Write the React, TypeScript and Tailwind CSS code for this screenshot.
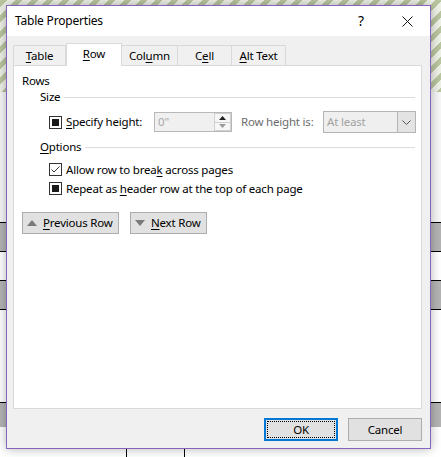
import React from "react";

const font = { fontFamily: '"Noto Sans", "Open Sans", sans-serif' };

function Box({ kind }: { kind: "ind" | "check" }) {
  return (
    <div className="relative w-[13px] h-[13px] border border-[#333333] bg-white shrink-0">
      {kind === "ind" ? (
        <div className="absolute left-[2px] top-[2px] w-[7px] h-[7px] bg-[#1a1a1a]" />
      ) : (
        <svg className="absolute left-0 top-0" width="11" height="11" viewBox="0 0 11 11">
          <polyline points="1.5,5.5 4,8 9.5,2.5" fill="none" stroke="#333" strokeWidth="1" />
        </svg>
      )}
    </div>
  );
}

function Sep({ ul, rest }: { ul: string; rest: string }) {
  return (
    <div className="flex items-center h-[16px] gap-[4px]">
      <span className="leading-[16px]">
        <u className="underline-offset-2">{ul}</u>
        {rest}
      </span>
      <div className="flex-1 h-px bg-[#dcdcdc]" />
    </div>
  );
}

export default function App() {
  return (
    <div
      className="relative w-[441px] h-[457px] overflow-hidden bg-white text-[11.5px] tracking-[-0.2px] whitespace-nowrap text-black"
      style={font}
    >
      {/* background document */}
      <div className="flex flex-col w-full h-full">
        <div className="h-[92px] bg-[repeating-linear-gradient(135deg,#b9c69f_0px,#b9c69f_5px,#eef1e6_5px,#eef1e6_11px)]" />
        <div className="h-[130px] bg-[#f7f7f7]" />
        <div className="h-px bg-black" />
        <div className="h-[28px] bg-[#b4b4b4]" />
        <div className="h-px bg-black" />
        <div className="h-[28px] bg-white" />
        <div className="h-px bg-black" />
        <div className="h-[28px] bg-[#b4b4b4]" />
        <div className="h-px bg-black" />
        <div className="h-[92px] bg-white" />
        <div className="h-px bg-black" />
        <div className="h-[24px] bg-[#b4b4b4]" />
        <div className="flex-1 flex bg-white">
          <div className="w-[126px]" />
          <div className="w-px bg-black" />
          <div className="w-[57px]" />
          <div className="w-px bg-black" />
        </div>
      </div>

      {/* dialog window */}
      <div className="absolute left-[6px] top-[5px] w-[425px] h-[444px] border border-[#8762c0] bg-[#f0f0f0] flex flex-col shadow-[0_0_10px_rgba(0,0,0,0.3)]">
        {/* title bar */}
        <div className="h-[30px] bg-white flex items-center shrink-0">
          <span className="pl-[8px] flex-1 leading-[16px] text-[12px]">Table Properties</span>
          <span className="w-[46px] text-center text-[14px] leading-[16px]">?</span>
          <div className="w-[46px] flex justify-center">
            <svg width="11" height="11" viewBox="0 0 11 11">
              <path d="M0.5 0.5 L10.5 10.5 M10.5 0.5 L0.5 10.5" stroke="#111" strokeWidth="1" />
            </svg>
          </div>
        </div>

        {/* body */}
        <div className="flex-1 flex flex-col pt-[7px] pl-[6px] pr-[8px]">
          {/* tabs */}
          <div className="flex items-end h-[22px] shrink-0 relative z-10">
            <div className="w-[53px] h-[20px] border border-b-0 border-[#d9d9d9] flex items-center justify-center leading-[16px]">
              <span><u className="underline-offset-2">T</u>able</span>
            </div>
            <div className="w-[56px] h-[23px] -mb-px bg-white border border-b-0 border-[#d9d9d9] flex items-center justify-center leading-[16px] pb-[3px]">
              <span><u className="underline-offset-2">R</u>ow</span>
            </div>
            <div className="w-[56px] h-[20px] border border-b-0 border-l-0 border-[#d9d9d9] flex items-center justify-center leading-[16px]">
              <span>Col<u className="underline-offset-2">u</u>mn</span>
            </div>
            <div className="w-[54px] h-[20px] border border-b-0 border-l-0 border-[#d9d9d9] flex items-center justify-center leading-[16px]">
              <span>C<u className="underline-offset-2">e</u>ll</span>
            </div>
            <div className="w-[54px] h-[20px] border border-b-0 border-l-0 border-[#d9d9d9] flex items-center justify-center leading-[16px]">
              <span><u className="underline-offset-2">A</u>lt Text</span>
            </div>
          </div>

          {/* panel */}
          <div className="flex-1 bg-white border border-[#d9d9d9] flex flex-col pt-[7px] pl-[8px] pr-[6px]">
            <div className="leading-[16px] h-[16px]">Rows</div>
            <div className="pl-[18px]">
              <Sep ul="" rest="Size" />
            </div>

            {/* specify row */}
            <div className="flex items-center h-[22px] mt-[6px] pl-[27px]">
              <Box kind="ind" />
              <span className="w-[92px] pl-[4px] leading-[16px] shrink-0">
                <u className="underline-offset-2">S</u>pecify height:
              </span>
              <div className="w-[78px] h-[20px] border border-[#b8b8b8] bg-[#f0f0f0] flex shrink-0">
                <span className="flex-1 pl-[3px] text-[#a8a8a8] leading-[18px]">0"</span>
                <div className="w-[17px] h-full flex flex-col border border-[#d0d0d0] bg-[#f7f7f7]">
                  <div className="flex-1 flex items-center justify-center border-b border-[#d0d0d0]">
                    <svg width="7" height="4" viewBox="0 0 7 4"><path d="M0 4 L3.5 0 L7 4 Z" fill="#222" /></svg>
                  </div>
                  <div className="flex-1 flex items-center justify-center">
                    <svg width="7" height="4" viewBox="0 0 7 4"><path d="M0 0 L3.5 4 L7 0 Z" fill="#9a9a9a" /></svg>
                  </div>
                </div>
              </div>
              <span className="w-[91px] pl-[9px] text-[#6d6d6d] leading-[16px] shrink-0">Row height is:</span>
              <div className="w-[93px] h-[22px] border border-[#b4b4b4] bg-[#efefef] flex shrink-0">
                <span className="flex-1 pl-[3px] text-[#a2a2a2] leading-[20px]">At least</span>
                <div className="w-[18px] h-full border-l border-[#b4b4b4] bg-[#e3e3e3] flex items-center justify-center">
                  <svg width="9" height="5" viewBox="0 0 9 5">
                    <polyline points="0.5,0.5 4.5,4.5 8.5,0.5" fill="none" stroke="#555" strokeWidth="1" />
                  </svg>
                </div>
              </div>
            </div>

            <div className="pl-[18px] mt-[6px]">
              <Sep ul="O" rest="ptions" />
            </div>

            <div className="flex items-center h-[19px] mt-[5px] pl-[27px] gap-[4px]">
              <Box kind="check" />
              <span className="leading-[16px]">
                Allow row to brea<u className="underline-offset-2">k</u> across pages
              </span>
            </div>
            <div className="flex items-center h-[19px] pl-[27px] gap-[4px]">
              <Box kind="ind" />
              <span className="leading-[16px]">
                Repeat as <u className="underline-offset-2">h</u>eader row at the top of each page
              </span>
            </div>

            <div className="flex mt-[14px] gap-[11px]">
              <div className="w-[97px] h-[22px] bg-[#e1e1e1] border border-[#adadad] flex items-center pl-[4px] gap-[6px]">
                <svg width="10" height="6" viewBox="0 0 10 6"><path d="M0 6 L5 0 L10 6 Z" fill="#7a7a7a" /></svg>
                <span className="leading-[16px]"><u className="underline-offset-2">P</u>revious Row</span>
              </div>
              <div className="w-[77px] h-[22px] bg-[#e1e1e1] border border-[#adadad] flex items-center pl-[4px] gap-[6px]">
                <svg width="10" height="6" viewBox="0 0 10 6"><path d="M0 0 L5 6 L10 0 Z" fill="#7a7a7a" /></svg>
                <span className="leading-[16px]"><u className="underline-offset-2">N</u>ext Row</span>
              </div>
            </div>
          </div>

          {/* footer */}
          <div className="h-[39px] shrink-0 flex justify-end items-start pt-[9px] gap-[10px]">
            <div className="w-[74px] h-[23px] border-2 border-[#0078d7] bg-[#e1e1e1] p-[1px]">
              <div className="w-full h-full border border-dotted border-black flex items-center justify-center leading-[16px]">
                OK
              </div>
            </div>
            <div className="w-[74px] h-[23px] border border-[#adadad] bg-[#e1e1e1] flex items-center justify-center leading-[16px]">
              Cancel
            </div>
          </div>
        </div>
      </div>
    </div>
  );
}
